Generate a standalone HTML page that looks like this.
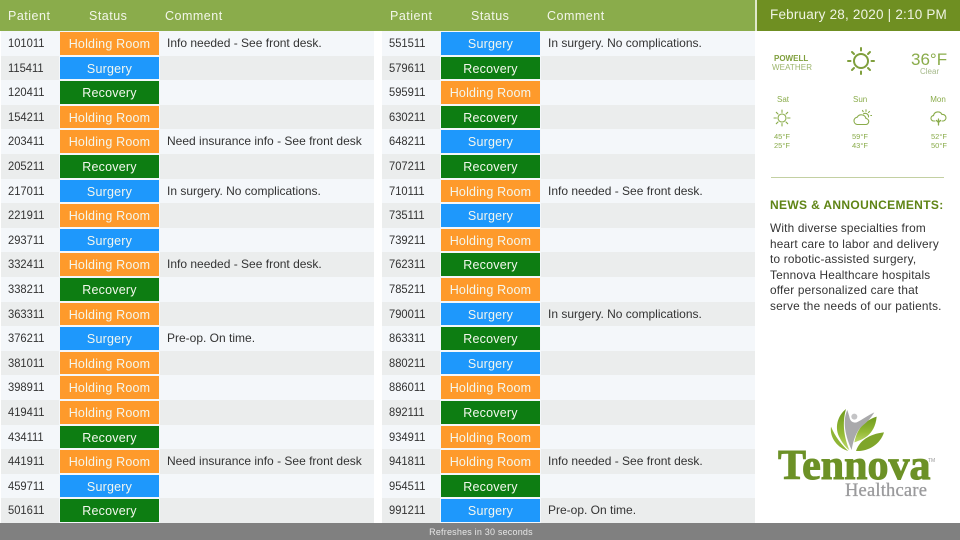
<!DOCTYPE html>
<html><head><meta charset="utf-8">
<style>
*{box-sizing:border-box}
html,body{margin:0;padding:0;width:960px;height:540px;overflow:hidden;background:#fff;font-family:"Liberation Sans",sans-serif;color:#333}
body{filter:blur(.35px)}
.a{position:absolute;white-space:nowrap}
.hd{position:absolute;left:0;top:0;width:755px;height:31px;background:#8aac4b}
.hd span{position:absolute;top:8px;color:#f3f6ea;font-size:12.5px;letter-spacing:.5px;line-height:16px}
.t{position:absolute;top:31px;width:373px}
.r{height:24.6px;position:relative;background:#f4f7fa;font-size:12px;line-height:24.5px}
.r:nth-child(even){background:#ebeded}
.r b{font-weight:400;position:absolute;left:7px;top:0;color:#333;white-space:nowrap;transform:scaleX(.93);transform-origin:left}
.r i{font-style:normal;position:absolute;left:58px;width:101px;top:0;bottom:0;text-align:center;color:#f4f7ee;border:1px solid #f4f7fa;font-size:12.5px;letter-spacing:.2px;white-space:nowrap}
.r em{font-style:normal;position:absolute;left:166px;top:0;color:#333;letter-spacing:0;white-space:nowrap}
.h{background:#fe9a2b}.s{background:#1e98fc}.c{background:#0d7d12}
.w{color:#8aac4b;text-align:center;position:absolute;white-space:nowrap}
</style></head><body>
<div class="hd"><span style="left:8px">Patient</span><span style="left:89px">Status</span><span style="left:165px">Comment</span><span style="left:390px">Patient</span><span style="left:471px">Status</span><span style="left:547px">Comment</span></div>
<div class="a" style="left:755px;top:0;width:2px;height:31px;background:#dfe8cc"></div>
<div class="a" style="left:757px;top:0;width:203px;height:31px;background:#6f8f22;color:#f0f4e4;font-size:13.5px;line-height:30px;padding-left:13px;letter-spacing:.2px">February 28, 2020 | 2:10 PM</div>

<div class="t" style="left:1px">
<div class="r"><b>101011</b><i class="h">Holding Room</i><em>Info needed - See front desk.</em></div>
<div class="r"><b>115411</b><i class="s">Surgery</i></div>
<div class="r"><b>120411</b><i class="c">Recovery</i></div>
<div class="r"><b>154211</b><i class="h">Holding Room</i></div>
<div class="r"><b>203411</b><i class="h">Holding Room</i><em>Need insurance info - See front desk</em></div>
<div class="r"><b>205211</b><i class="c">Recovery</i></div>
<div class="r"><b>217011</b><i class="s">Surgery</i><em>In surgery. No complications.</em></div>
<div class="r"><b>221911</b><i class="h">Holding Room</i></div>
<div class="r"><b>293711</b><i class="s">Surgery</i></div>
<div class="r"><b>332411</b><i class="h">Holding Room</i><em>Info needed - See front desk.</em></div>
<div class="r"><b>338211</b><i class="c">Recovery</i></div>
<div class="r"><b>363311</b><i class="h">Holding Room</i></div>
<div class="r"><b>376211</b><i class="s">Surgery</i><em>Pre-op. On time.</em></div>
<div class="r"><b>381011</b><i class="h">Holding Room</i></div>
<div class="r"><b>398911</b><i class="h">Holding Room</i></div>
<div class="r"><b>419411</b><i class="h">Holding Room</i></div>
<div class="r"><b>434111</b><i class="c">Recovery</i></div>
<div class="r"><b>441911</b><i class="h">Holding Room</i><em>Need insurance info - See front desk</em></div>
<div class="r"><b>459711</b><i class="s">Surgery</i></div>
<div class="r"><b>501611</b><i class="c">Recovery</i></div>
</div>

<div class="t" style="left:382px">
<div class="r"><b>551511</b><i class="s">Surgery</i><em>In surgery. No complications.</em></div>
<div class="r"><b>579611</b><i class="c">Recovery</i></div>
<div class="r"><b>595911</b><i class="h">Holding Room</i></div>
<div class="r"><b>630211</b><i class="c">Recovery</i></div>
<div class="r"><b>648211</b><i class="s">Surgery</i></div>
<div class="r"><b>707211</b><i class="c">Recovery</i></div>
<div class="r"><b>710111</b><i class="h">Holding Room</i><em>Info needed - See front desk.</em></div>
<div class="r"><b>735111</b><i class="s">Surgery</i></div>
<div class="r"><b>739211</b><i class="h">Holding Room</i></div>
<div class="r"><b>762311</b><i class="c">Recovery</i></div>
<div class="r"><b>785211</b><i class="h">Holding Room</i></div>
<div class="r"><b>790011</b><i class="s">Surgery</i><em>In surgery. No complications.</em></div>
<div class="r"><b>863311</b><i class="c">Recovery</i></div>
<div class="r"><b>880211</b><i class="s">Surgery</i></div>
<div class="r"><b>886011</b><i class="h">Holding Room</i></div>
<div class="r"><b>892111</b><i class="c">Recovery</i></div>
<div class="r"><b>934911</b><i class="h">Holding Room</i></div>
<div class="r"><b>941811</b><i class="h">Holding Room</i><em>Info needed - See front desk.</em></div>
<div class="r"><b>954511</b><i class="c">Recovery</i></div>
<div class="r"><b>991211</b><i class="s">Surgery</i><em>Pre-op. On time.</em></div>
</div>

<!-- weather -->
<div class="w" style="left:774px;top:54px;font-size:8px;font-weight:700;color:#7f9f3c">POWELL</div>
<div class="w" style="left:772px;top:63px;font-size:8px;color:#9db56c;letter-spacing:.1px">WEATHER</div>
<svg class="a" style="left:846px;top:46px" width="30" height="30" viewBox="0 0 30 30" fill="none" stroke="#7f9f3c" stroke-width="2" stroke-linecap="round"><circle cx="15" cy="15" r="7"/><path d="M15 2v2.500M15 25.500V28M2 15h2.500M25.500 15H28M6 6l2 2M22 22l2 2M6 24l2-2M22 8l2-2"/></svg>
<div class="w" style="left:911px;top:50px;font-size:17px;color:#8aac4b">36°F</div>
<div class="w" style="left:920px;top:67px;font-size:8px;color:#a5b98a">Clear</div>

<div class="w" style="left:777px;top:95px;font-size:8px;width:11px">Sat</div>
<div class="w" style="left:853px;top:95px;font-size:8px;width:14px">Sun</div>
<div class="w" style="left:930px;top:95px;font-size:8px;width:16px">Mon</div>
<svg class="a" style="left:773px;top:109px" width="18" height="18" viewBox="0 0 18 18" fill="none" stroke="#8aac4b" stroke-width="1.100" stroke-linecap="round"><circle cx="9" cy="9" r="4"/><path d="M9 1v2.400M9 14.600V17M1 9h2.400M14.600 9H17M3.300 3.300L5 5M13 13l1.700 1.700M3.300 14.700L5 13M13 5l1.700-1.700"/></svg>
<svg class="a" style="left:852px;top:109px" width="20" height="17" viewBox="0 0 20 17" fill="none" stroke="#8aac4b" stroke-width="1.100" stroke-linecap="round"><path d="M5 15.500h8.500a3 3 0 0 0 .5-6A4.800 4.800 0 0 0 5.200 8.200 3.700 3.700 0 0 0 5 15.500z"/><path d="M11.500 4.800a3.300 3.300 0 0 1 5 3.200M14 .8v1.600M18.800 6.500h1M17.500 2.500l-1 1M10.500 1.500l.7 1.200"/></svg>
<svg class="a" style="left:930px;top:110px" width="17" height="17" viewBox="0 0 17 17" fill="none" stroke="#8aac4b" stroke-width="1.100" stroke-linecap="round"><path d="M5 11H3.800a2.700 2.700 0 0 1-.3-5.400A4.500 4.500 0 0 1 12 4.500 3.300 3.300 0 0 1 13.300 11H12"/><path d="M8.500 9v6M6.500 10.500l2 2 2-2" stroke-width="1.300"/></svg>
<div class="w" style="left:774px;top:133px;font-size:7.500px;line-height:8.500px;text-align:left">45°F<br>25°F</div>
<div class="w" style="left:852px;top:133px;font-size:7.500px;line-height:8.500px;text-align:left">59°F<br>43°F</div>
<div class="w" style="left:931px;top:133px;font-size:7.500px;line-height:8.500px;text-align:left">52°F<br>50°F</div>

<div class="a" style="left:771px;top:177px;width:173px;height:1px;background:#c3d0a2"></div>
<div class="a" style="left:770px;top:197px;font-size:12px;font-weight:700;color:#5f8415;letter-spacing:.35px;line-height:16px">NEWS &amp; ANNOUNCEMENTS:</div>
<div class="a" style="left:770px;top:221px;font-size:11.800px;line-height:15.600px;color:#333;letter-spacing:.2px">With diverse specialties from<br>heart care to labor and delivery<br>to robotic-assisted surgery,<br>Tennova Healthcare hospitals<br>offer personalized care that<br>serve the needs of our patients.</div>

<!-- logo -->
<svg class="a" style="left:760px;top:395px" width="200" height="145" viewBox="0 0 600 435">
<defs><linearGradient id="g" x1="0" y1="0" x2="0" y2="1"><stop offset="0" stop-color="#6f9a1e"/><stop offset=".6" stop-color="#94ba35"/><stop offset="1" stop-color="#bcd66a"/></linearGradient></defs>
<path d="M258 42C232 62 222 100 240 130 248 145 258 158 268 165 252 125 246 85 258 42z" fill="url(#g)"/>
<path d="M213 95C208 130 235 160 265 168 245 150 225 125 213 95z" fill="#8fb535"/>
<path d="M350 65C320 75 292 95 283 142 305 135 345 122 350 65z" fill="url(#g)"/>
<path d="M372 112C340 115 300 130 288 168 322 170 360 150 372 112z" fill="#7fa52a"/>
<path d="M262 45C250 70 250 110 275 165 280 135 290 105 310 90 325 78 335 65 343 52 325 60 305 75 290 82 278 85 270 78 268 65z" fill="#a9a9ab"/>
<circle cx="283" cy="65" r="9" fill="#c4c4c6"/>
</svg>
<div class="a" style="left:778px;top:444px;font-family:'Liberation Serif',serif;font-weight:700;font-size:42px;line-height:44px;color:#6c9126;letter-spacing:0;-webkit-text-stroke:1px #6c9126">Tennova</div>
<div class="a" style="left:928px;top:458px;font-size:5px;color:#999">TM</div>
<div class="a" style="left:845px;top:481px;font-family:'Liberation Serif',serif;font-size:18.500px;line-height:20px;color:#9a9a9c;letter-spacing:.2px;-webkit-text-stroke:.3px #9a9a9c">Healthcare</div>

<div class="a" style="left:0;top:523px;width:960px;height:17px;background:#808080;color:#e6e6e6;font-size:9px;line-height:18px;text-align:center;padding-left:2px;letter-spacing:.2px">Refreshes in 30 seconds</div>
</body></html>
